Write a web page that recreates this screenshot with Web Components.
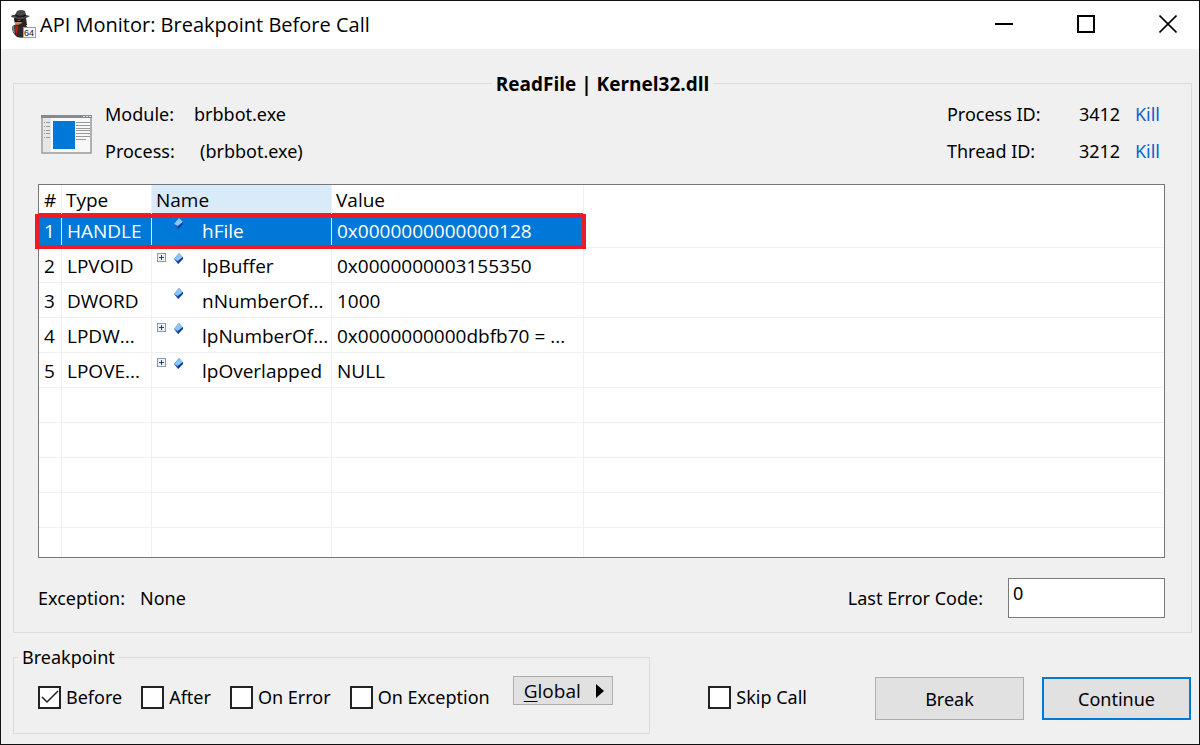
<!DOCTYPE html>
<html lang="en">
<head>
<meta charset="utf-8">
<title>API Monitor: Breakpoint Before Call</title>
<style>
  body { margin: 0; font-family: "Noto Sans", "Open Sans", sans-serif; font-size: 18px; line-height: 24px; color: #000; background: #f0f0f0; }
  .body { display: flex; flex-direction: column; gap: 12px; padding: 22px 7px 8px 12px; }
  .foot { display: flex; justify-content: space-between; }
  .actions { display: flex; align-items: flex-start; gap: 18px; padding: 32px 1px 0 0; }
  .actions check-option { margin: 8px 50px 0 0; }
  .options { display: flex; align-items: flex-start; gap: 19px; padding: 7px 36px 24px 24px; }
  .options check-option { margin-top: 9px; }
  .options menu-button { margin-left: 4px; }
</style>
</head>
<body>
<dialog-window caption="API Monitor: Breakpoint Before Call">
  <div class="body">
    <group-box heading="ReadFile | Kernel32.dll" main>
      <call-summary></call-summary>
      <param-list></param-list>
      <error-bar></error-bar>
    </group-box>
    <div class="foot">
      <group-box heading="Breakpoint">
        <div class="options">
          <check-option checked>Before</check-option>
          <check-option>After</check-option>
          <check-option>On Error</check-option>
          <check-option>On Exception</check-option>
          <menu-button></menu-button>
        </div>
      </group-box>
      <div class="actions">
        <check-option>Skip Call</check-option>
        <push-button>Break</push-button>
        <push-button primary>Continue</push-button>
      </div>
    </div>
  </div>
</dialog-window>

<script>
class Base extends HTMLElement {
  connectedCallback() {
    if (this.shadowRoot) return;
    this.attachShadow({ mode: "open" }).innerHTML =
      "<style>*{box-sizing:border-box}" + this.css() + "</style>" + this.html();
  }
}

customElements.define("spy-icon", class extends Base {
  css() { return ":host{display:block;width:26px;height:30px}svg{display:block}text{font:9px 'Liberation Sans',sans-serif}"; }
  html() { return `<svg width="26" height="30" viewBox="0 0 26 30" aria-hidden="true">
    <path d="M1 17 Q3 14 8 14 L14 14 Q17 17 17 20 L17 26 Q12 29 6 27 Q1 23 1 17Z" fill="#2c2c2c"/>
    <path d="M3 8 L15 8 L16 15 L11 17 L4 14Z" fill="#2a2422"/>
    <path d="M4 11 L10 10 L11 13 L7 15 L4 14Z" fill="#c48a60"/>
    <path d="M3 9 L8 11 L12 9 L11 12 L4 12Z" fill="#111"/>
    <path d="M4 15 L7 16 L7 21 L6 25 L4 21Z" fill="#c81016"/>
    <path d="M1 16 L3 16 L4 24 L2 22Z" fill="#858585"/>
    <path d="M4 5 L6 1 Q10 -1 14 1 L15 5 L19 6 Q12 10 8 9 L0 7 L1 5Z" fill="#484848"/>
    <path d="M4 5 Q9 8 15 5" fill="none" stroke="#181818" stroke-width="1.500"/>
    <rect x="12.500" y="17.500" width="12" height="10" fill="#f6f6f6" stroke="#a0a0a0"/>
    <text x="13" y="26" fill="#222">64</text></svg>`; }
});

customElements.define("dialog-window", class extends Base {
  css() { return `
    :host{display:flex;flex-direction:column;box-sizing:border-box;min-height:100vh;border:1px solid #111;background:#f0f0f0}
    header{display:flex;align-items:center;height:48px;padding-left:10px;background:#fff}
    h1{flex:1;margin:0 0 0 3px;font:20px/28px "Open Sans",sans-serif}
    nav{display:flex;gap:20px}
    button{width:62px;height:46px;padding:0 0 2px;border:0;background:none;display:grid;place-items:center}
    svg{display:block;fill:none;stroke:#000;stroke-width:2}
    .thin{stroke-width:1.600}`; }
  html() { return `<header><spy-icon></spy-icon><h1>${this.getAttribute("caption")}</h1><nav>
    <button type="button" aria-label="Minimize"><svg width="18" height="18"><path d="M0 9H18"/></svg></button>
    <button type="button" aria-label="Maximize"><svg width="18" height="18"><path d="M1 1H17V17H1Z"/></svg></button>
    <button type="button" aria-label="Close"><svg class="thin" width="18" height="18"><path d="M.5 .5L17.500 17.500M17.500 .5L.5 17.500"/></svg></button>
    </nav></header><slot></slot>`; }
});

customElements.define("group-box", class extends Base {
  css() { return `
    :host{display:block}
    fieldset{margin:0;padding:0;min-width:0;border:1px solid #dcdcdc}
    legend{margin-left:4px;padding:0 4px;line-height:24px}
    :host([main]) legend{margin:0 auto;padding-top:2px;font:bold 19px/22px "Open Sans",sans-serif}`; }
  html() { return `<fieldset><legend>${this.getAttribute("heading")}</legend><slot></slot></fieldset>`; }
});

customElements.define("call-summary", class extends Base {
  css() { return `
    :host{display:flex;align-items:flex-start;padding:7px 31px 21px 27px}
    svg{display:block;margin:13px 13px 0 0}
    dl{display:grid;margin:0;row-gap:13px;grid-template-columns:89px auto}
    dl.ids{margin-left:auto;grid-template-columns:132px 56px auto}
    dd,dt{margin:0}
    .inner{padding-left:6px}
    a{color:#0a64d2;text-decoration:none}`; }
  html() { return `
    <svg width="51" height="39" viewBox="0 0 51 39" aria-hidden="true">
      <rect x="1" y="1" width="49" height="37" fill="#f8f8f8" stroke="#999" stroke-width="1.500"/>
      <rect x="2" y="3" width="8" height="34" fill="#e6e6e6"/>
      <rect x="0" y="0" width="51" height="3" fill="#848b90"/>
      <path d="M42 1.500H44M45 1.500H47M48 1.500H50" stroke="#ddd"/>
      <rect x="12" y="6" width="22" height="28" fill="#0078d7"/>
      <path d="M3 7.500H4M5 7.500H9M3 11.500H4M5 11.500H9M3 15.500H4M5 15.500H9M3 18.500H4M5 18.500H9M3 22.500H4M5 22.500H9" stroke="#999"/>
      <path d="M35 7.500H49M35 10.500H49M35 13.500H49M35 15.500H49M35 18.500H49M35 21.500H49M35 24.500H45" stroke="#999"/>
    </svg>
    <dl><dt>Module:</dt><dd>brbbot.exe</dd><dt>Process:</dt><dd class="inner">(brbbot.exe)</dd></dl>
    <dl class="ids"><dt>Process ID:</dt><dd>3412</dd><dd><a href="#kill-process">Kill</a></dd>
      <dt>Thread ID:</dt><dd>3212</dd><dd><a href="#kill-thread">Kill</a></dd></dl>`; }
});

const PARAMS = [
  ["1", "HANDLE", "hFile", "0x0000000000000128", false],
  ["2", "LPVOID", "lpBuffer", "0x0000000003155350", true],
  ["3", "DWORD", "nNumberOf...", "1000", false],
  ["4", "LPDW...", "lpNumberOf...", "0x0000000000dbfb70 = ...", true],
  ["5", "LPOVE...", "lpOverlapped", "NULL", true]
];
const PLUS = `<svg width="9" height="9" aria-hidden="true"><rect x=".5" y=".5" width="8" height="8" fill="#eef1f6" stroke="#8c98ac"/><path d="M2 4.500H7M4.500 2V7" stroke="#29406e"/></svg>`;
const GEM = `<svg width="9" height="11" viewBox="0 0 9 11" aria-hidden="true"><path d="M5 0L9 5L4 11L0 6Z" fill="#1c5ab8"/><path d="M5 0L9 4L4 8L0 6Z" fill="#8cc4f4"/><path d="M9 4L4 8V11L9 6Z" fill="#0c3c94"/></svg>`;

customElements.define("param-list", class extends Base {
  css() { return `
    :host{display:block;position:relative;margin:0 26px 0 24px;border:1px solid #777;background:#fff;font:19px/26px "Open Sans",sans-serif}
    table{width:100%;border-collapse:separate;border-spacing:0;table-layout:fixed}
    .n{width:23px}.t{width:90px}.m{width:180px}.v{width:252px}
    th,td{padding:2px 0 0 5px;text-align:left;font-weight:normal;white-space:nowrap;border-right:1px solid #f0f0f0}
    th:last-child,td:last-child{border-right:0}
    th{height:28px}
    th:nth-child(n+2){padding-left:4px}
    th:nth-child(3){background:#d9ebf9}
    td{height:35px;border-bottom:1px solid #f0f0f0}
    tr:last-child td{height:29px;border-bottom:0}
    .sel td:not(:last-child){background:#0078d7;color:#fff}
    .name{display:grid;grid-template-columns:17px 28px auto}
    .name svg{display:block}
    .mark{position:absolute;left:-4px;top:29px;width:551px;height:35px;border:4px solid #ed1c24;pointer-events:none}`; }
  html() {
    const row = ([n, t, m, v, open], i) => `<tr${i ? "" : ' class="sel"'}><td>${n}</td><td>${t}</td>
      <td><div class="name"><span>${open ? PLUS : ""}</span><span>${GEM}</span><span>${m}</span></div></td><td>${v}</td><td></td></tr>`;
    return `<table><colgroup><col class="n"><col class="t"><col class="m"><col class="v"><col></colgroup>
      <thead><tr><th>#</th><th>Type</th><th>Name</th><th>Value</th><th></th></tr></thead>
      <tbody>${PARAMS.map(row).join("")}${"<tr><td></td><td></td><td></td><td></td><td></td></tr>".repeat(5)}</tbody></table>
      <div class="mark"></div>`;
  }
});

customElements.define("error-bar", class extends Base {
  css() { return `
    :host{display:flex;align-items:center;padding:20px 26px 14px 24px}
    .gap{margin-left:15px}
    label{margin-left:auto}
    input{width:157px;height:40px;margin-left:25px;padding:0 4px 10px;border:1px solid #7a7a7a;border-radius:0;background:#fff;color:#000;font:inherit;line-height:24px}`; }
  html() { return `<span>Exception:</span><span class="gap">None</span><label for="code">Last Error Code:</label><input id="code" type="text" value="0">`; }
});

customElements.define("check-option", class extends Base {
  css() { return `
    :host{display:block}
    label{display:flex;align-items:center;gap:5px;position:relative;white-space:nowrap}
    input{appearance:none;width:23px;height:23px;margin:0;border:2px solid #222;background:#fff}
    svg{position:absolute;left:3px;top:5px;display:none;fill:none;stroke:#222;stroke-width:1.500}
    input:checked + svg{display:block}`; }
  html() { return `<label><input type="checkbox"${this.hasAttribute("checked") ? " checked" : ""}><svg width="18" height="14" aria-hidden="true"><path d="M1 7L6 12L17 1"/></svg><span><slot></slot></span></label>`; }
});

customElements.define("push-button", class extends Base {
  css() { return `
    :host{display:block}
    button{width:149px;height:43px;padding:0;border:1px solid #adadad;background:#e1e1e1;color:#000;font:inherit}
    :host([primary]) button{border:2px solid #0078d7}`; }
  html() { return `<button type="button"><slot></slot></button>`; }
});

customElements.define("menu-button", class extends Base {
  css() { return `
    :host{display:block}
    button{display:flex;align-items:center;justify-content:space-between;width:100px;height:29px;padding:0 8px 0 10px;border:1px solid #adadad;background:#e1e1e1;color:#000;font:19px/24px "Open Sans",sans-serif}
    u{text-decoration-thickness:1px;text-underline-offset:3px}
    svg{display:block}`; }
  html() { return `<button type="button" aria-haspopup="menu"><span><u>G</u>lobal</span><svg width="8" height="14" aria-hidden="true"><path d="M0 0L8 7L0 14Z"/></svg></button>`; }
});
</script>
</body>
</html>
